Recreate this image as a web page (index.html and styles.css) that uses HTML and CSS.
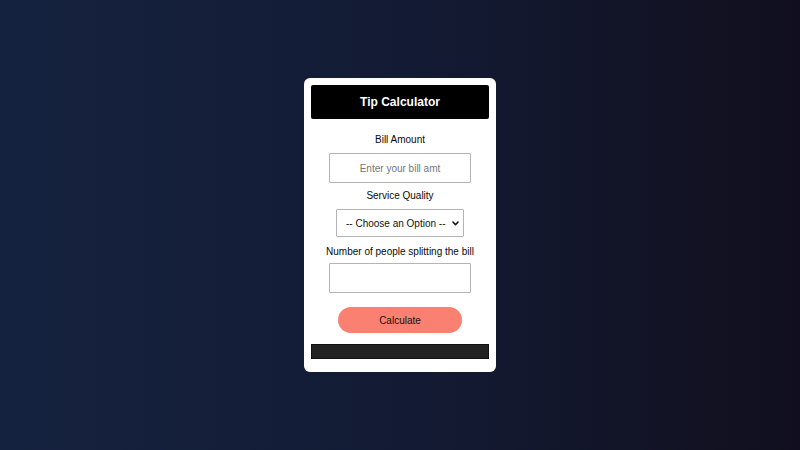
FILE: index.html
```html
<!DOCTYPE html>
<html lang="en">
<head>
<meta charset="utf-8">
<title>Tip Calculator</title>
<link rel="stylesheet" href="styles.css">
</head>
<body>
<main class="page">
  <div class="card">
    <header class="card-header">
      <h1 class="title">Tip Calculator</h1>
    </header>
    <form class="form">
      <label class="label label-first" for="bill">Bill Amount</label>
      <input class="field" id="bill" type="text" placeholder="Enter your bill amt">
      <label class="label" for="service">Service Quality</label>
      <div class="select-wrap">
        <select class="select" id="service">
          <option>-- Choose an Option --</option>
          <option>30% - Outstanding</option>
          <option>20% - Good</option>
          <option>15% - It was OK</option>
          <option>10% - Bad</option>
          <option>5% - Terrible</option>
        </select>
        <svg class="chevron" width="7" height="5" viewBox="0 0 7 5" aria-hidden="true">
          <path d="M1 1 L3.5 3.7 L6 1" fill="none" stroke="#111" stroke-width="1.6" stroke-linecap="round" stroke-linejoin="round"/>
        </svg>
      </div>
      <label class="label label-people" for="people">Number of people splitting the bill</label>
      <input class="field field-people" id="people" type="text">
      <button class="calc" type="button">Calculate</button>
    </form>
    <div class="result"></div>
  </div>
</main>
</body>
</html>
```
FILE: styles.css
```css
* { box-sizing: border-box; }
html, body { margin: 0; padding: 0; height: 100%; }
body {
  font-family: "Liberation Sans", Arial, sans-serif;
  background: linear-gradient(to right, #15223f 0%, #131b34 50%, #110f1e 100%);
}
.page {
  height: 450px;
  display: flex;
  align-items: center;
  justify-content: center;
}
.card {
  width: 192px;
  background: #ffffff;
  border-radius: 6px;
  padding: 7px 7px 13px;
  display: flex;
  flex-direction: column;
}
.card-header {
  height: 34px;
  background: #000000;
  border-radius: 2px;
  display: flex;
  align-items: center;
  justify-content: center;
}
.title {
  margin: 0;
  color: #ffffff;
  font-size: 12px;
  font-weight: bold;
  line-height: 14px;
}
.form {
  display: flex;
  flex-direction: column;
  align-items: center;
}
.label {
  font-size: 10px;
  line-height: 12px;
  color: #0a0a0a;
  margin-top: 7px;
}
.label-first { margin-top: 15px; }
.label-people { margin-top: 9px; }
.field {
  width: 142px;
  height: 30px;
  margin-top: 7px;
  border: 1.5px solid #b4b4b4;
  border-radius: 1px;
  font-family: "Liberation Sans", Arial, sans-serif;
  font-size: 10px;
  text-align: center;
  color: #222222;
  background: #ffffff;
  padding: 0 4px;
}
.field::placeholder { color: #777777; }
.field-people { margin-top: 5px; }
.select-wrap {
  position: relative;
  width: 128px;
  height: 28px;
  margin-top: 7px;
}
.select {
  -webkit-appearance: none;
  appearance: none;
  width: 100%;
  height: 100%;
  border: 1.5px solid #b4b4b4;
  border-radius: 1px;
  font-family: "Liberation Sans", Arial, sans-serif;
  font-size: 10px;
  color: #111111;
  background-color: #ffffff;
  padding: 0 0 0 9px;
}
.chevron {
  position: absolute;
  right: 5px;
  top: 12px;
  pointer-events: none;
}
.calc {
  width: 124px;
  height: 26px;
  margin-top: 14px;
  border: none;
  border-radius: 13px;
  background: #fa8072;
  color: #1a1010;
  font-family: "Liberation Sans", Arial, sans-serif;
  font-size: 10px;
}
.result {
  height: 15px;
  margin-top: 11px;
  background: #222222;
  border: 1px solid #111111;
}
```
